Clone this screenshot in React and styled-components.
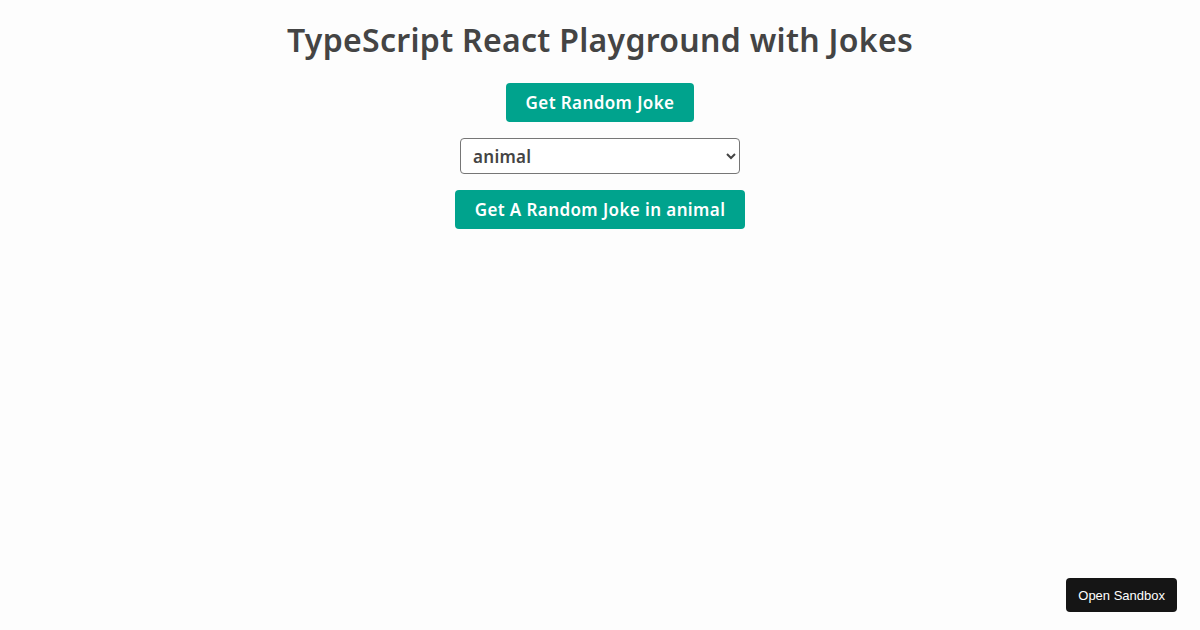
import React, { useState } from "react";
import styled, { createGlobalStyle } from "styled-components";

const GlobalStyle = createGlobalStyle`
  html, body {
    margin: 0;
    padding: 0;
    background: #fdfdfd;
  }
  body {
    font-family: "Noto Sans", "Open Sans", sans-serif;
    color: #444;
  }
`;

const Page = styled.div`
  position: relative;
  width: 1200px;
  height: 630px;
  display: flex;
  flex-direction: column;
  align-items: center;
`;

const Title = styled.h1`
  margin: 18px 0 21px;
  font-size: 32px;
  line-height: 44px;
  font-weight: 600;
  color: #444;
  letter-spacing: 0.3px;
`;

const Controls = styled.div`
  display: flex;
  flex-direction: column;
  align-items: center;
  gap: 16px;
`;

const ActionButton = styled.button`
  height: 39px;
  padding: 0 20px;
  border: none;
  border-radius: 4px;
  background: #00a38d;
  color: #fff;
  font-family: inherit;
  font-size: 17px;
  font-weight: 600;
  letter-spacing: 0.4px;
  cursor: pointer;
`;

const CategorySelect = styled.select`
  width: 280px;
  height: 36px;
  padding: 0 8px;
  border: 1px solid #767676;
  border-radius: 4px;
  background: #fff;
  color: #444;
  font-family: inherit;
  font-size: 17px;
  font-weight: 600;
  letter-spacing: 0.3px;
`;

const SandboxLink = styled.a`
  position: absolute;
  right: 23px;
  bottom: 18px;
  display: flex;
  align-items: center;
  height: 34px;
  padding: 0 12px;
  border-radius: 4px;
  background: #151515;
  color: #fff;
  font-family: "Liberation Sans", Arial, sans-serif;
  font-size: 13px;
  text-decoration: none;
`;

const categories = [
  "animal",
  "career",
  "celebrity",
  "dev",
  "explicit",
  "fashion",
  "food",
  "history",
  "money",
  "movie",
  "music",
  "political",
  "religion",
  "science",
  "sport",
  "travel",
];

export default function App() {
  const [category, setCategory] = useState("animal");

  return (
    <>
      <GlobalStyle />
      <Page>
        <Title>TypeScript React Playground with Jokes</Title>
        <Controls>
          <ActionButton>Get Random Joke</ActionButton>
          <CategorySelect
            value={category}
            onChange={(e) => setCategory(e.target.value)}
          >
            {categories.map((c) => (
              <option key={c} value={c}>
                {c}
              </option>
            ))}
          </CategorySelect>
          <ActionButton>Get A Random Joke in {category}</ActionButton>
        </Controls>
        <SandboxLink href="#">Open Sandbox</SandboxLink>
      </Page>
    </>
  );
}
